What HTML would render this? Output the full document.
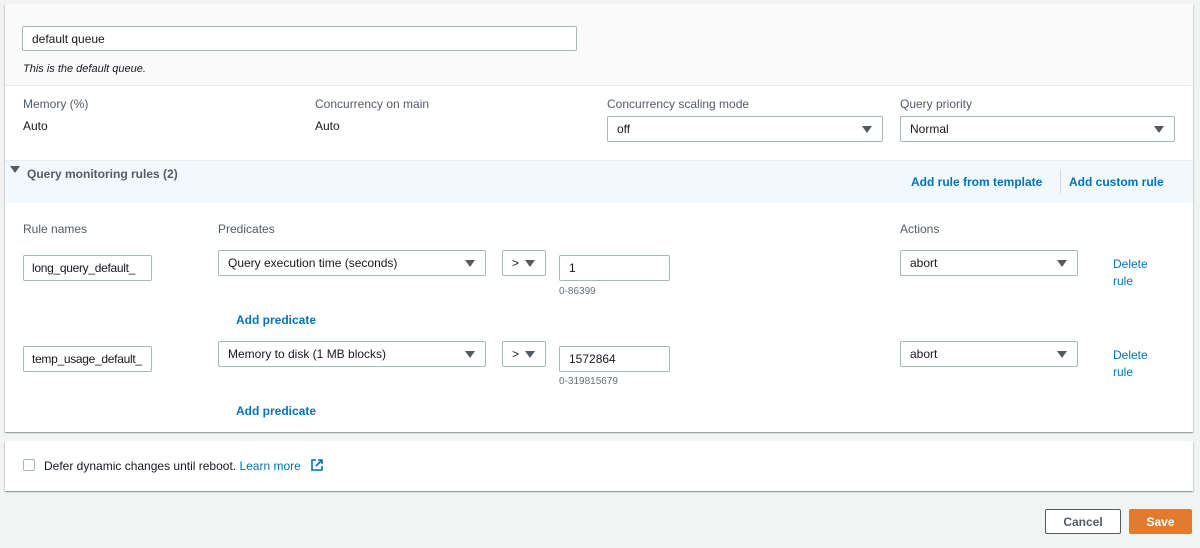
<!DOCTYPE html>
<html><head><meta charset="utf-8"><style>
*{box-sizing:border-box;margin:0;padding:0}
body{width:1200px;height:548px;background:#f2f3f3;font-family:"Liberation Sans",sans-serif;font-size:12px;color:#16191f;position:relative;overflow:hidden}
.a{position:absolute}
.panel{background:#fff;box-shadow:0 1px 1px rgba(0,28,36,.3),1px 1px 1px rgba(0,28,36,.1),-1px 1px 1px rgba(0,28,36,.1)}
.inp{position:absolute;background:#fff;border:1px solid #aab7b8;border-radius:2px;padding-left:9px;display:flex;align-items:center;white-space:nowrap;overflow:hidden;font-size:12px}
.sel::after{content:"";position:absolute;right:10px;top:50%;margin-top:-3px;border-left:5px solid transparent;border-right:5px solid transparent;border-top:7px solid #545b64}
.lbl{position:absolute;color:#545b64;font-size:12px}
.lnk{position:absolute;color:#0073bb;font-weight:bold;font-size:12px}
.hint{position:absolute;color:#687078;font-size:10px}
</style></head><body>
<div class="a panel" style="left:5px;top:4px;width:1188px;height:428px"></div>
<div class="a" style="left:5px;top:4px;width:1188px;height:82px;background:#fafafa;border-bottom:1px solid #eaeded"></div>
<div class="inp" style="left:22px;top:26px;width:555px;height:25px;">default queue</div>
<div class="a" style="left:23px;top:63px;font-style:italic;font-size:11px">This is the default queue.</div>

<div class="lbl" style="left:23px;top:97px">Memory (%)</div>
<div class="a" style="left:23px;top:119px">Auto</div>
<div class="lbl" style="left:315px;top:97px">Concurrency on main</div>
<div class="a" style="left:315px;top:119px">Auto</div>
<div class="lbl" style="left:607px;top:97px">Concurrency scaling mode</div>
<div class="inp sel" style="left:607px;top:116px;width:276px;height:26px">off</div>
<div class="lbl" style="left:900px;top:97px">Query priority</div>
<div class="inp sel" style="left:900px;top:116px;width:275px;height:26px">Normal</div>

<div class="a" style="left:5px;top:160px;width:1188px;height:43px;background:#f1f8fe;border-top:1px solid #eaeded"></div>
<div class="a" style="left:10px;top:166px;width:0;height:0;border-left:5px solid transparent;border-right:5px solid transparent;border-top:7px solid #545b64"></div>
<div class="a" style="left:27px;top:167px;font-weight:bold;color:#545b64">Query monitoring rules (2)</div>
<div class="lnk" style="left:911px;top:175px">Add rule from template</div>
<div class="a" style="left:1060px;top:169px;width:1px;height:24px;background:#d5dbdb"></div>
<div class="lnk" style="left:1069px;top:175px">Add custom rule</div>

<div class="lbl" style="left:23px;top:222px">Rule names</div>
<div class="lbl" style="left:218px;top:222px">Predicates</div>
<div class="lbl" style="left:900px;top:222px">Actions</div>

<div class="inp" style="left:23px;top:255px;width:129px;height:26px;padding-left:8px;letter-spacing:-0.3px">long_query_default_</div>
<div class="inp sel" style="left:218px;top:250px;width:268px;height:26px">Query execution time (seconds)</div>
<div class="inp sel" style="left:502px;top:250px;width:44px;height:26px">&gt;</div>
<div class="inp" style="left:559px;top:255px;width:111px;height:26px">1</div>
<div class="hint" style="left:559px;top:286px">0-86399</div>
<div class="inp sel" style="left:900px;top:250px;width:178px;height:26px">abort</div>
<div class="a" style="left:1113px;top:256px;color:#0073bb;line-height:17px">Delete<br>rule</div>
<div class="lnk" style="left:236px;top:313px">Add predicate</div>

<div class="inp" style="left:23px;top:346px;width:129px;height:26px;padding-left:8px;letter-spacing:-0.3px">temp_usage_default_</div>
<div class="inp sel" style="left:218px;top:341px;width:268px;height:26px">Memory to disk (1 MB blocks)</div>
<div class="inp sel" style="left:502px;top:341px;width:44px;height:26px">&gt;</div>
<div class="inp" style="left:559px;top:346px;width:111px;height:26px">1572864</div>
<div class="hint" style="left:559px;top:376px">0-319815679</div>
<div class="inp sel" style="left:900px;top:341px;width:178px;height:26px">abort</div>
<div class="a" style="left:1113px;top:347px;color:#0073bb;line-height:17px">Delete<br>rule</div>
<div class="lnk" style="left:236px;top:404px">Add predicate</div>

<div class="a panel" style="left:5px;top:441px;width:1188px;height:50px"></div>
<div class="a" style="left:23px;top:459px;width:12px;height:12px;border:1px solid #aab7b8;border-radius:2px;background:#fff"></div>
<div class="a" style="left:44px;top:459px">Defer dynamic changes until reboot. <span style="color:#0073bb">Learn more</span></div>
<svg class="a" style="left:310px;top:458px" width="14" height="14" viewBox="0 0 14 14" fill="none" stroke="#0073bb" stroke-width="1.6"><path d="M6 2H2v10h10V8M8 2h4v4M12 2L6 8"/></svg>

<div class="a" style="left:1045px;top:509px;width:76px;height:25px;border:1px solid #545b64;border-radius:2px;background:#fff;color:#545b64;font-weight:bold;display:flex;align-items:center;justify-content:center">Cancel</div>
<div class="a" style="left:1129px;top:509px;width:63px;height:25px;border-radius:2px;background:#e07b2f;color:#fff;font-weight:bold;display:flex;align-items:center;justify-content:center">Save</div>
</body></html>
